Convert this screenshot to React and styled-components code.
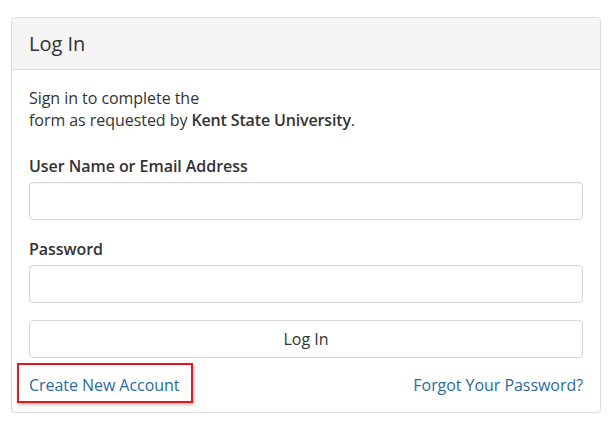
import styled, { createGlobalStyle } from "styled-components";

const Global = createGlobalStyle`
  body {
    margin: 0;
    background: #fff;
    font-family: "Open Sans", "Noto Sans", sans-serif;
    color: #333;
  }
`;

function App() {
  return (
    <>
      <Global />
      <Panel>
        <Header>Log In</Header>
        <Body>
          <Intro>
            Sign in to complete the
            <br />
            form as requested by <b>Kent State University</b>.
          </Intro>
          <Field>
            <Label>User Name or Email Address</Label>
            <Input type="text" />
          </Field>
          <Field>
            <Label>Password</Label>
            <Input type="password" />
          </Field>
          <Button>Log In</Button>
          <Links>
            <Highlight>
              <Link href="#">Create New Account</Link>
            </Highlight>
            <Link href="#">Forgot Your Password?</Link>
          </Links>
        </Body>
      </Panel>
    </>
  );
}

export default App;

const Panel = styled.div`
  margin: 17px 0 0 11px;
  width: 590px;
  box-sizing: border-box;
  border: 1px solid #ddd;
  border-radius: 4px;
  box-shadow: 0 1px 2px rgba(0, 0, 0, 0.06);
  background: #fff;
`;

const Header = styled.div`
  height: 51px;
  display: flex;
  align-items: center;
  padding: 0 17px;
  background: #f5f5f5;
  border-bottom: 1px solid #ddd;
  border-radius: 3px 3px 0 0;
  font-size: 20px;
  color: #333;
`;

const Body = styled.div`
  padding: 17px 17px 16px 17px;
  display: flex;
  flex-direction: column;
`;

const Intro = styled.p`
  margin: 0 0 24px;
  font-size: 16px;
  line-height: 22px;
  letter-spacing: -0.05px;
  b {
    font-weight: 600;
    letter-spacing: -0.15px;
  }
`;

const Field = styled.div`
  display: flex;
  flex-direction: column;
  gap: 5px;
  & + & {
    margin-top: 18px;
  }
`;

const Label = styled.label`
  font-size: 16px;
  line-height: 22px;
  font-weight: 600;
  letter-spacing: -0.05px;
`;

const Input = styled.input`
  height: 38px;
  box-sizing: border-box;
  border: 1px solid #d4d4d4;
  border-radius: 4px;
  padding: 6px 12px;
  font: inherit;
  box-shadow: inset 0 1px 1px rgba(0, 0, 0, 0.04);
`;

const Button = styled.button`
  margin-top: 17px;
  height: 38px;
  background: #fff;
  border: 1px solid #d4d4d4;
  border-radius: 4px;
  font-family: "Open Sans", "Noto Sans", sans-serif;
  font-size: 16px;
  color: #333;
`;

const Links = styled.div`
  margin-top: 16px;
  display: flex;
  justify-content: space-between;
  align-items: center;
  line-height: 22px;
  letter-spacing: -0.05px;
`;

const Highlight = styled.span`
  position: relative;
  &::after {
    content: "";
    position: absolute;
    left: -12px;
    top: -11px;
    width: 176px;
    height: 40px;
    box-sizing: border-box;
    border: 2px solid #e8141a;
    box-shadow: 1px 2px 3px rgba(0, 0, 0, 0.25);
    pointer-events: none;
  }
`;

const Link = styled.a`
  font-size: 16px;
  color: #2b6aa1;
  text-decoration: none;
`;
